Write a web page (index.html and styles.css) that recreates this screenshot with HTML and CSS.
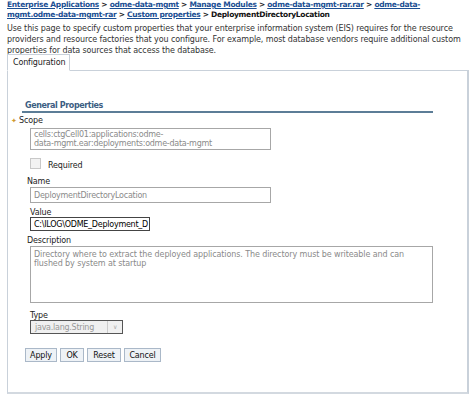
FILE: index.html
```html
<!DOCTYPE html>
<html>
<head>
<meta charset="utf-8">
<link rel="stylesheet" href="styles.css">
</head>
<body>
<div class="crumbs"><a href="#">Enterprise Applications</a> &gt; <a href="#">odme-data-mgmt</a> &gt; <a href="#">Manage Modules</a> &gt; <a href="#">odme-data-mgmt-rar.rar</a> &gt; <a href="#">odme-data-mgmt.odme-data-mgmt-rar</a> &gt; <a href="#">Custom properties</a> &gt; <b>DeploymentDirectoryLocation</b></div>
<p class="intro">Use this page to specify custom properties that your enterprise information system (EIS) requires for the resource providers and resource factories that you configure. For example, most database vendors require additional custom properties for data sources that access the database.</p>
<div class="tabs"><span class="tab">Configuration</span></div>
<div class="panel">
  <div class="section">
    <h3 class="heading">General Properties</h3>
    <div class="label scope"><span class="star">&#10022;</span> Scope</div>
    <div class="box ro scopebox">cells:ctgCell01:applications:odme-<br>data-mgmt.ear:deployments:odme-data-mgmt</div>
    <div class="check"><span class="cb"></span><span class="cbtext">Required</span></div>
    <div class="label namelbl">Name</div>
    <div class="box ro namebox">DeploymentDirectoryLocation</div>
    <div class="label ind vallbl">Value</div>
    <div class="box valbox">C:\ILOG\ODME_Deployment_D</div>
    <div class="label desclbl">Description</div>
    <div class="box ro descbox">Directory where to extract the deployed applications. The directory must be writeable and can flushed by system at startup</div>
    <div class="label ind typelbl">Type</div>
    <div class="select"><span class="selval">java.lang.String</span><span class="arrow">&#8744;</span></div>
    <div class="buttons"><span class="btn b1">Apply</span><span class="btn b2">OK</span><span class="btn b3">Reset</span><span class="btn b4">Cancel</span></div>
  </div>
</div>
</body>
</html>
```
FILE: styles.css
```css
html, body { margin: 0; padding: 0; background: #fff; }
body {
  font-family: "DejaVu Sans", Verdana, sans-serif;
  font-size: 8px;
  letter-spacing: -0.15px;
  color: #222;
  width: 474px;
  height: 397px;
  overflow: hidden;
}
.crumbs {
  padding: 0 20px 0 7px;
  font-weight: bold;
  font-size: 7.5px;
  letter-spacing: -0.3px;
  line-height: 10px;
  color: #222;
}
.crumbs a { color: #1b4f93; text-decoration: underline; }
.crumbs b { color: #111; }
.intro {
  margin: 3px 5px 0 7px;
  line-height: 11px;
  letter-spacing: -0.1px;
  color: #333;
}
.tabs {
  margin: -2px 0 0 7px;
  display: flex;
}
.tab {
  border: 1px solid #c9d1da;
  border-bottom: 1px solid #fff;
  padding: 3px 4px 3px 5px;
  line-height: 9px;
  background: #fff;
  margin-bottom: -1px;
  position: relative;
  z-index: 1;
  color: #222;
}
.panel {
  margin: 0 5px 0 7px;
  border: 1px solid #c9d1da;
  border-right: 2px solid #c9d1da;
  border-bottom: 2px solid #d3d9e0;
  height: 324px;
  box-sizing: border-box;
}
.section {
  padding: 30px 0 0 6px;
}
.heading {
  margin: 0 34px 0 8px;
  padding: 0 0 0 3px;
  font-size: 8px;
  letter-spacing: -0.4px;
  font-weight: bold;
  color: #3c5d82;
  border-bottom: 2px solid #5c7d97;
  line-height: 10px;
}
.label {
  color: #222;
  line-height: 9px;
  margin-left: 13px;
}
.scope { margin: 3px 0 0 -3px; }
.star { color: #d09a30; font-size: 7px; }
.label.ind { margin-left: 16px; }
.box {
  margin-left: 16px;
  border: 1px solid #a7a7a7;
  padding: 2px 3px;
  line-height: 9px;
  box-sizing: border-box;
  letter-spacing: -0.25px;
}
.ro { color: #8a8a8a; }
.scopebox { width: 241px; height: 22px; margin-top: 2px; padding-top: 1px; }
.check {
  display: flex;
  align-items: flex-start;
  margin: 8px 0 0 16px;
  gap: 7px;
}
.cb {
  width: 9px; height: 9px;
  border: 1px solid #c8c8c8;
  background: #f2f2f2;
}
.cbtext { padding-top: 3px; line-height: 9px; }
.namelbl { margin-top: 7px; }
.namebox { width: 241px; height: 16px; margin-top: 1px; padding-top: 3px; }
.vallbl { margin-top: 5px; }
.valbox {
  width: 120px; height: 14px;
  border: 1px solid #444;
  color: #000;
  padding: 2px 3px;
  white-space: nowrap;
  overflow: hidden;
}
.desclbl { margin-top: 5px; }
.descbox {
  width: 403px; height: 57px; margin-top: 1px;
  padding: 3px 18px 2px 3px;
  letter-spacing: -0.1px;
}
.typelbl { margin-top: 8px; }
.select {
  margin-left: 16px;
  width: 93px; height: 14px;
  border: 1px solid #555;
  box-sizing: border-box;
  background: #f0f0f0;
  display: flex;
  color: #999;
  letter-spacing: -0.25px;
}
.selval { flex: 1; padding: 2px 0 0 4px; line-height: 9px; }
.arrow { width: 14px; border-left: 1px solid #ccc; text-align: center; font-size: 6px; line-height: 12px; color: #aaa; }
.buttons {
  display: flex;
  gap: 3px;
  margin: 14px 0 0 11px;
}
.btn {
  border: 1px solid #aab8c8;
  background: #eef2f6;
  color: #111;
  padding: 2px 0;
  line-height: 9px;
  text-align: center;
  box-sizing: border-box;
  height: 14px;
}
.b1 { width: 32px; }
.b2 { width: 24px; }
.b3 { width: 34px; }
.b4 { width: 37px; }
```
